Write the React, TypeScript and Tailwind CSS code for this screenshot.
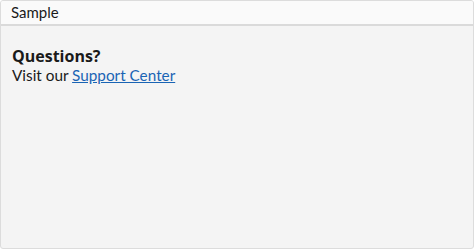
export default function App() {
  return (
    <div className="w-[474px] h-[249px] bg-white font-['Lato',sans-serif]">
      <div className="h-full flex flex-col border border-[#dcdcdc] rounded-[3px] overflow-hidden bg-[#f4f4f4]">
        {/* Header */}
        <div className="h-[25px] shrink-0 flex items-center px-[10px] bg-[#fafafa] border-b-2 border-[#dadada] text-[15px] text-[#1a1a1a]">
          Sample
        </div>
        {/* Body */}
        <div className="flex-1 px-[11px] pt-[21px] text-[#1a1a1a]">
          <div className="font-bold font-['Open_Sans',sans-serif] text-[16px] leading-[19px]">Questions?</div>
          <div className="text-[15.3px] leading-[19px]">
            Visit our{' '}
            <a href="#" className="text-[#1a64b4] underline">
              Support Center
            </a>
          </div>
        </div>
      </div>
    </div>
  );
}
